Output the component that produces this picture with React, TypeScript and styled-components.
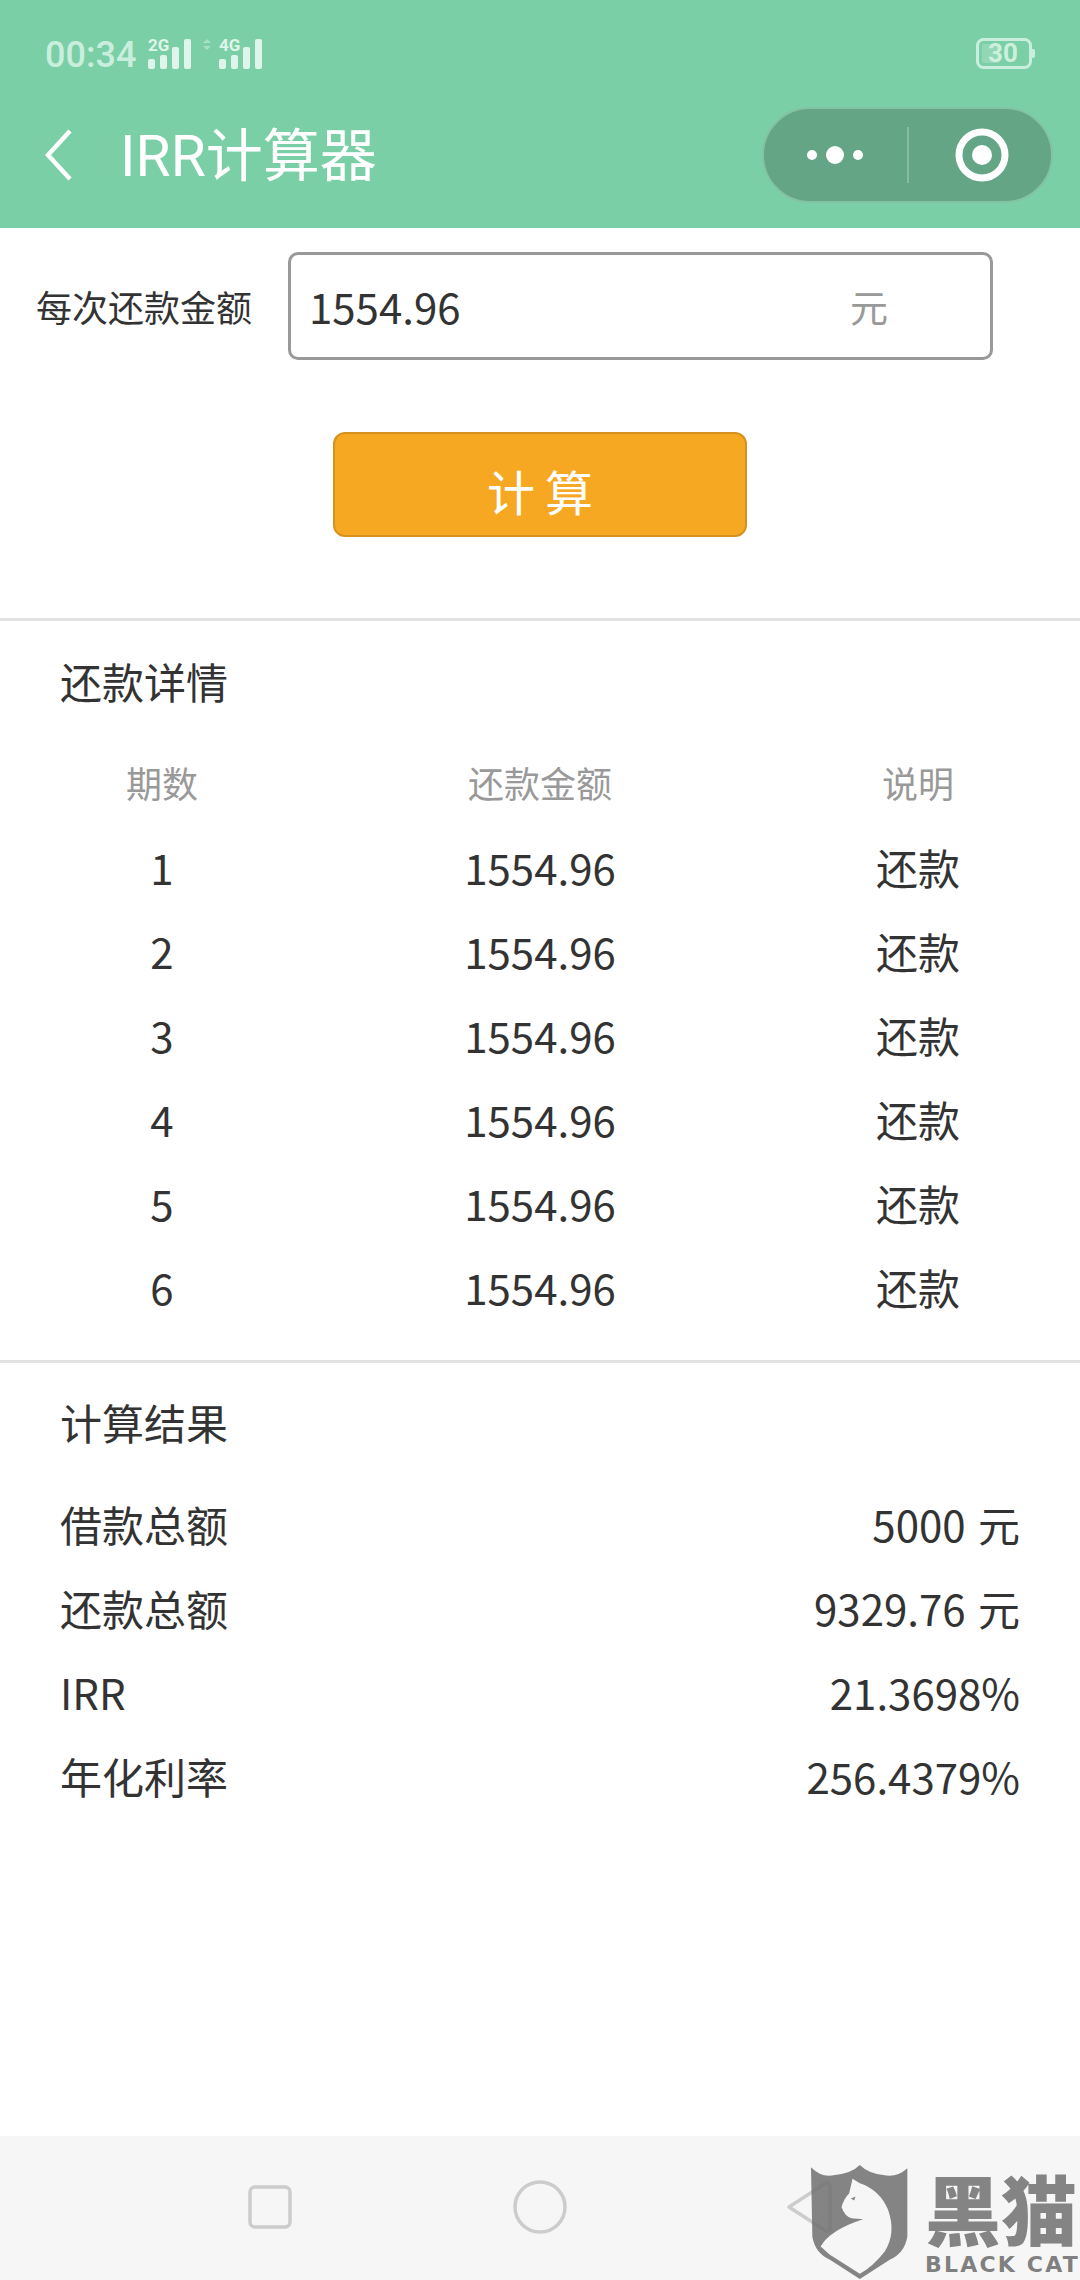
import React from "react";
import styled, { createGlobalStyle } from "styled-components";

const CJK = `Roboto, "Noto Sans CJK SC", sans-serif`;
const BODY = `"Noto Sans CJK SC", sans-serif`;

const Global = createGlobalStyle`
  html, body { margin: 0; padding: 0; background: #fff; }
  * { box-sizing: border-box; }
`;

const Page = styled.div`
  width: 1080px;
  height: 2280px;
  display: flex;
  flex-direction: column;
  background: #fff;
  font-family: ${BODY};
  color: #333;
  overflow: hidden;
`;

const Header = styled.header`
  height: 228px;
  flex: none;
  background: #7bcfa6;
  display: flex;
  flex-direction: column;
`;

const StatusBar = styled.div`
  height: 108px;
  padding: 32px 45px 0 45px;
  display: flex;
  align-items: flex-start;
  justify-content: space-between;
  color: #caeedd;
`;

const StatusLeft = styled.div`
  display: flex;
  align-items: flex-start;
`;

const Clock = styled.span`
  font: 500 36px/46px Roboto, sans-serif;
  width: 102px;
`;

const SignalBox = styled.div<{ $w: number }>`
  position: relative;
  width: ${(p) => p.$w}px;
  height: 34px;
  margin-top: 7px;
`;

const SignalType = styled.span`
  position: absolute;
  left: 1px;
  top: -3px;
  font: 700 17px/18px Roboto, sans-serif;
  color: #dff4ea;
`;

const Battery = styled.div`
  position: relative;
  width: 59px;
  height: 31px;
  margin-top: 6px;
`;

const BatteryText = styled.span`
  position: absolute;
  left: 11px;
  top: 0;
  width: 32px;
  text-align: center;
  font: 700 26px/31px Roboto, sans-serif;
  color: #cdefde;
`;

const NavRow = styled.div`
  height: 94px;
  padding: 0 27px 0 45px;
  display: flex;
  align-items: center;
`;

const Title = styled.h1`
  margin: 4px auto 0 48px;
  font: 400 57px/70px ${CJK};
  color: #fff;
`;

const Capsule = styled.div`
  width: 291px;
  height: 96px;
  border-radius: 48px;
  background: #64a586;
  border: 2px solid #84c2a4;
  display: flex;
  align-items: center;
`;

const CapsuleLeft = styled.div`
  width: 143px;
  height: 100%;
  padding-right: 2px;
  display: flex;
  align-items: center;
  justify-content: center;
`;

const CapsuleRight = styled.div`
  flex: 1;
  height: 100%;
  padding-left: 4px;
  display: flex;
  align-items: center;
  justify-content: center;
`;

const CapsuleDivider = styled.div`
  width: 2px;
  height: 56px;
  background: #86bca1;
`;

const FormSection = styled.section`
  height: 390px;
  flex: none;
  padding-top: 24px;
`;

const InputRow = styled.div`
  display: flex;
  align-items: center;
  padding-left: 36px;
`;

const InputLabel = styled.label`
  width: 252px;
  font-size: 36px;
  line-height: 107px;
`;

const InputBox = styled.div`
  width: 705px;
  height: 108px;
  border: 3px solid #999;
  border-radius: 10px;
  padding: 0 0 0 18px;
  display: flex;
  align-items: center;
`;

const InputValue = styled.span`
  font-size: 42px;
  width: 541px;
  line-height: 1;
`;

const Unit = styled.span`
  font-size: 38px;
  line-height: 1;
  color: #999;
`;

const ButtonRow = styled.div`
  display: flex;
  justify-content: center;
  padding-top: 72px;
`;

const ActionButton = styled.button`
  width: 414px;
  height: 105px;
  background: #f7a823;
  border: 2px solid #d6921e;
  border-radius: 12px;
  color: #fff;
  font: 400 48px/1 ${BODY};
  letter-spacing: 10px;
  padding: 11px 0 0 10px;
`;

const Section = styled.section<{ $top: number }>`
  border-top: 3px solid #e2e2e2;
  padding-top: ${(p) => p.$top}px;
`;

const SectionTitle = styled.h2`
  margin: 0;
  padding-left: 60px;
  font: 400 42px/84px ${BODY};
`;

const Table = styled.div`
  margin-top: 17px;
  padding-bottom: 31px;
`;

const TableRow = styled.div<{ $head?: boolean }>`
  display: grid;
  grid-template-columns: 324px 432px 324px;
  height: 84px;
  margin-bottom: ${(p) => (p.$head ? 1 : 0)}px;
  line-height: 84px;
  text-align: center;
  font-size: ${(p) => (p.$head ? 36 : 42)}px;
  color: ${(p) => (p.$head ? "#999" : "#333")};
`;

const ResultList = styled.div`
  margin-top: 18px;
  padding: 0 60px;
`;

const ResultRow = styled.div`
  display: flex;
  justify-content: space-between;
  height: 84px;
  font-size: 42px;
  line-height: 84px;
`;

const ResultValue = styled.span`
  word-spacing: 3px;
`;

const Spacer = styled.div`
  flex: 1;
`;

const BottomNav = styled.footer`
  position: relative;
  height: 144px;
  flex: none;
  background: #f6f6f6;
  display: grid;
  grid-template-columns: repeat(3, 270px);
  justify-content: center;
  align-items: center;
`;

const NavCell = styled.div`
  display: flex;
  justify-content: center;
  align-items: center;
  padding-bottom: 2px;
`;

const Watermark = styled.div`
  position: absolute;
  right: 0;
  bottom: 0;
  width: 269px;
  height: 117px;
`;

const MarkName = styled.span`
  position: absolute;
  left: 114px;
  top: 6px;
  font: 900 76px/76px "Noto Sans CJK SC", sans-serif;
  color: rgba(112, 112, 112, 0.85);
  white-space: nowrap;
`;

const MarkLatin = styled.span`
  position: absolute;
  left: 114px;
  top: 90px;
  font: 700 22px/24px "DejaVu Sans", sans-serif;
  letter-spacing: 2.2px;
  color: rgba(112, 112, 112, 0.9);
  white-space: nowrap;
`;

const MarkShield = styled.svg`
  position: absolute;
  left: 0;
  top: 0;
`;

const Signal = ({ label, arrows }: { label: string; arrows?: boolean }) => (
  <SignalBox $w={arrows ? 58 : 71}>
    <SignalType>{label}</SignalType>
    <svg width="68" height="34" viewBox="0 0 68 34" style={{ position: "absolute", left: 0, top: 0, overflow: "visible" }}>
      {arrows && (
        <g fill="#a9dfc4">
          <path d="M-11 0l-4 4h8zM-11 11l-4-4h8z" />
        </g>
      )}
      <g fill="#dff4ea">
        <rect x="1" y="20" width="7" height="10" rx="2" />
        <rect x="13" y="16" width="7" height="14" rx="2" />
        <rect x="25" y="8" width="7" height="22" rx="2" />
        <rect x="37" y="0" width="7" height="30" rx="2" />
      </g>
    </svg>
  </SignalBox>
);

const rows = [1, 2, 3, 4, 5, 6];
const results: [string, string][] = [
  ["借款总额", "5000 元"],
  ["还款总额", "9329.76 元"],
  ["IRR", "21.3698%"],
  ["年化利率", "256.4379%"],
];

export default function App() {
  return (
    <Page>
      <Global />
      <Header>
        <StatusBar>
          <StatusLeft>
            <Clock>00:34</Clock>
            <Signal label="2G" />
            <Signal label="4G" arrows />
          </StatusLeft>
          <Battery>
            <svg width="59" height="31" viewBox="0 0 59 31">
              <rect x="1.5" y="1.5" width="53" height="28" rx="6" fill="none" stroke="#caeedd" strokeWidth="3" />
              <rect x="6" y="6" width="18" height="19" rx="2" fill="#92d7b6" />
              <path d="M56 11h1a2 2 0 0 1 2 2v5a2 2 0 0 1-2 2h-1z" fill="#caeedd" />
            </svg>
            <BatteryText>30</BatteryText>
          </Battery>
        </StatusBar>
        <NavRow>
          <svg width="27" height="52" viewBox="0 0 27 52">
            <path d="M25 2L3 26l22 24" fill="none" stroke="#fff" strokeWidth="4.5" />
          </svg>
          <Title>IRR计算器</Title>
          <Capsule>
            <CapsuleLeft>
              <svg width="60" height="20" viewBox="0 0 60 20">
                <circle cx="7" cy="10" r="5" fill="#fff" />
                <circle cx="30" cy="10" r="9" fill="#fff" />
                <circle cx="53" cy="10" r="5" fill="#fff" />
              </svg>
            </CapsuleLeft>
            <CapsuleDivider />
            <CapsuleRight>
              <svg width="54" height="54" viewBox="0 0 54 54">
                <circle cx="27" cy="27" r="23" fill="none" stroke="#fff" strokeWidth="7" />
                <circle cx="27" cy="27" r="10" fill="#fff" />
              </svg>
            </CapsuleRight>
          </Capsule>
        </NavRow>
      </Header>

      <FormSection>
        <InputRow>
          <InputLabel>每次还款金额</InputLabel>
          <InputBox>
            <InputValue>1554.96</InputValue>
            <Unit>元</Unit>
          </InputBox>
        </InputRow>
        <ButtonRow>
          <ActionButton>计算</ActionButton>
        </ButtonRow>
      </FormSection>

      <Section $top={18}>
        <SectionTitle>还款详情</SectionTitle>
        <Table>
          <TableRow $head>
            <span>期数</span>
            <span>还款金额</span>
            <span>说明</span>
          </TableRow>
          {rows.map((n) => (
            <TableRow key={n}>
              <span>{n}</span>
              <span>1554.96</span>
              <span>还款</span>
            </TableRow>
          ))}
        </Table>
      </Section>

      <Section $top={17}>
        <SectionTitle>计算结果</SectionTitle>
        <ResultList>
          {results.map(([k, v]) => (
            <ResultRow key={k}>
              <span>{k}</span>
              <ResultValue>{v}</ResultValue>
            </ResultRow>
          ))}
        </ResultList>
      </Section>

      <Spacer />

      <BottomNav>
        <NavCell>
          <svg width="44" height="44" viewBox="0 0 44 44">
            <rect x="2" y="2" width="40" height="40" rx="5" fill="none" stroke="#ccc" strokeWidth="3.5" />
          </svg>
        </NavCell>
        <NavCell>
          <svg width="54" height="54" viewBox="0 0 54 54">
            <circle cx="27" cy="27" r="25" fill="none" stroke="#ccc" strokeWidth="3.5" />
          </svg>
        </NavCell>
        <NavCell>
          <svg width="48" height="54" viewBox="0 0 48 54">
            <path d="M3 27L40 3q4-1 4 4v40q0 5-4 4z" fill="none" stroke="#ccc" strokeWidth="3.5" strokeLinejoin="round" />
          </svg>
        </NavCell>
        <Watermark>
          <MarkShield width="98" height="117" viewBox="93 40 295 350">
            <path
              d="M93 52Q125 85 165 75Q215 70 240 45Q265 70 310 75Q350 85 383 55V260Q375 310 330 330L240 388L150 330Q105 310 97 260Z"
              fill="rgba(112,112,112,.85)"
            />
            <path
              d="M218 86L240 100Q300 120 325 180Q350 250 315 305Q280 350 240 372L150 315L122 290Q150 240 250 208L215 205Q195 200 185 172Q190 150 208 130Z"
              fill="#f6f6f6"
            />
            <path d="M213 146l14-6-4 12z" fill="rgba(112,112,112,.85)" />
          </MarkShield>
          <MarkName>黑猫</MarkName>
          <MarkLatin>BLACK CAT</MarkLatin>
        </Watermark>
      </BottomNav>
    </Page>
  );
}
